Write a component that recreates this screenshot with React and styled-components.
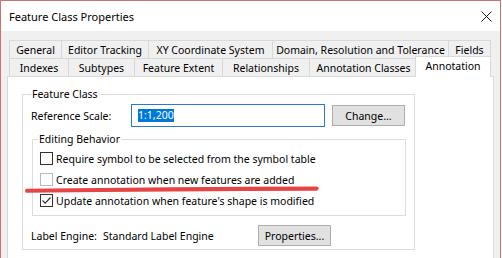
import React from 'react';
import styled, { createGlobalStyle } from 'styled-components';

const GlobalStyle = createGlobalStyle`
  html, body { margin: 0; padding: 0; background: #fff; }
  body {
    font-family: "Noto Sans", "Liberation Sans", sans-serif;
    font-size: 10.5px;
    color: #000;
  }
`;

const rowOne = [
  ['General', 52],
  ['Editor Tracking', 87],
  ['XY Coordinate System', 124],
  ['Domain, Resolution and Tolerance', 176],
  ['Fields', 43],
];

const rowTwo = [
  ['Indexes', 59],
  ['Subtypes', 66],
  ['Feature Extent', 88],
  ['Relationships', 87],
  ['Annotation Classes', 108],
];

const checks = [
  { label: 'Require symbol to be selected from the symbol table', state: 'off' },
  { label: 'Create annotation when new features are added', state: 'faded' },
  { label: "Update annotation when feature's shape is modified", state: 'on' },
];

export default function App() {
  return (
    <>
      <GlobalStyle />
      <Window>
        <TitleBar>
          <span>Feature Class Properties</span>
          <CloseBox>
            <svg width="11" height="11" viewBox="0 0 11 11">
              <path d="M0.5 0.5 L10.5 10.5 M10.5 0.5 L0.5 10.5" stroke="#111" strokeWidth="1" />
            </svg>
          </CloseBox>
        </TitleBar>

        <Body>
          <TabRow>
            {rowOne.map(([name, w], i) => (
              <Tab key={name} $w={w} $last={i === rowOne.length - 1}>{name}</Tab>
            ))}
          </TabRow>
          <TabRow>
            {rowTwo.map(([name, w]) => (
              <Tab key={name} $w={w}>{name}</Tab>
            ))}
            <ActiveTab>Annotation</ActiveTab>
          </TabRow>

          <Panel>
            <Group $w={393}>
              <Legend>Feature Class</Legend>
              <ScaleRow>
                <span>Reference Scale:</span>
                <TextBox><Selected>1:1,200</Selected></TextBox>
                <Button>Change...</Button>
              </ScaleRow>

              <SubGroup>
                <SubLegend>Editing Behavior</SubLegend>
                {checks.map((c) => (
                  <CheckRow key={c.label}>
                    <Box $state={c.state}>
                      {c.state === 'on' && (
                        <svg width="11" height="11" viewBox="0 0 11 11">
                          <path d="M1.5 5.5 L4.2 8.2 L9.5 2.5" stroke="#333" strokeWidth="1.2" fill="none" />
                        </svg>
                      )}
                    </Box>
                    <span>{c.label}</span>
                  </CheckRow>
                ))}
              </SubGroup>

              <EngineRow>
                <span>Label Engine:</span>
                <span>Standard Label Engine</span>
                <Button>Properties...</Button>
              </EngineRow>
            </Group>
          </Panel>
        </Body>

        <Markup width="296" height="10" viewBox="0 0 296 10">
          <path d="M1 3.8 Q150 1.8 292 1.4 Q295.5 2.8 292 5.8 Q150 6.4 1 7.8 Q-0.8 5.8 1 3.8 Z" fill="#e64545" />
        </Markup>
      </Window>
    </>
  );
}

const Window = styled.div`
  position: relative;
  width: 501px;
  height: 258px;
  box-sizing: border-box;
  border: 1px solid #cc7070;
  border-bottom: none;
  display: flex;
  flex-direction: column;
  overflow: hidden;
  background: #f0f0f0;
`;

const TitleBar = styled.div`
  height: 30px;
  flex-shrink: 0;
  background: #fff;
  display: flex;
  align-items: center;
  justify-content: space-between;
  padding-left: 8px;
  font-size: 11px;
`;

const CloseBox = styled.div`
  width: 11px;
  height: 11px;
  margin-right: 8px;
  display: flex;
`;

const Body = styled.div`
  flex: 1;
  display: flex;
  flex-direction: column;
  padding: 9px 6px 0 6px;
`;

const TabRow = styled.div`
  display: flex;
  height: 18px;
  padding-left: 2px;
`;

const Tab = styled.div`
  width: ${(p) => p.$w}px;
  height: 18px;
  box-sizing: border-box;
  border: 1px solid #d9d9d9;
  border-bottom: none;
  border-right: ${(p) => (p.$last ? '1px solid #d9d9d9' : 'none')};
  display: flex;
  align-items: center;
  justify-content: center;
  white-space: nowrap;
  background: #f0f0f0;
`;

const ActiveTab = styled.div`
  position: relative;
  z-index: 1;
  width: 76px;
  height: 21px;
  margin: -2px 0 0 -2px;
  box-sizing: border-box;
  border: 1px solid #d9d9d9;
  border-bottom: none;
  background: #fff;
  display: flex;
  align-items: center;
  justify-content: center;
  padding-bottom: 2px;
`;

const Panel = styled.div`
  flex: 1;
  background: #fff;
  border: 1px solid #d9d9d9;
  border-bottom: none;
  padding: 10px 0 0 14px;
`;

const Group = styled.fieldset`
  width: ${(p) => p.$w}px;
  box-sizing: border-box;
  margin: 0;
  padding: 0 8px 2px 8px;
  border: 1px solid #dcdcdc;
`;

const Legend = styled.legend`
  padding: 0 1px;
  line-height: 14px;
`;

const ScaleRow = styled.div`
  display: grid;
  grid-template-columns: 93px 194px 73px;
  column-gap: 7px;
  align-items: center;
  height: 23px;
  margin-top: 3px;
`;

const TextBox = styled.div`
  height: 23px;
  box-sizing: border-box;
  border: 1px solid #2f78c4;
  display: flex;
  align-items: center;
  padding-left: 6px;
`;

const Selected = styled.span`
  background: #0078d7;
  color: #fff;
  line-height: 13px;
`;

const Button = styled.div`
  height: 21px;
  box-sizing: border-box;
  background: #e1e1e1;
  border: 1px solid #adadad;
  display: flex;
  align-items: center;
  justify-content: center;
`;

const SubGroup = styled.fieldset`
  width: 374px;
  box-sizing: border-box;
  margin: 5px 0 0 1px;
  padding: 2px 0 4px 7px;
  border: 1px solid #dcdcdc;
`;

const SubLegend = styled.legend`
  padding: 0 1px;
  margin-left: -2px;
  line-height: 14px;
`;

const CheckRow = styled.div`
  display: flex;
  align-items: center;
  gap: 3px;
  height: 21px;
  white-space: nowrap;
`;

const Box = styled.div`
  width: 13px;
  height: 13px;
  box-sizing: border-box;
  border: 1px solid ${(p) => (p.$state === 'faded' ? '#b9b9b9' : '#333')};
  background: #fff;
  display: flex;
  align-items: center;
  justify-content: center;
`;

const EngineRow = styled.div`
  display: grid;
  grid-template-columns: 72px 155px 73px;
  align-items: center;
  height: 23px;
  margin-top: 8px;
`;

const Markup = styled.svg`
  position: absolute;
  left: 24px;
  top: 184px;
`;
